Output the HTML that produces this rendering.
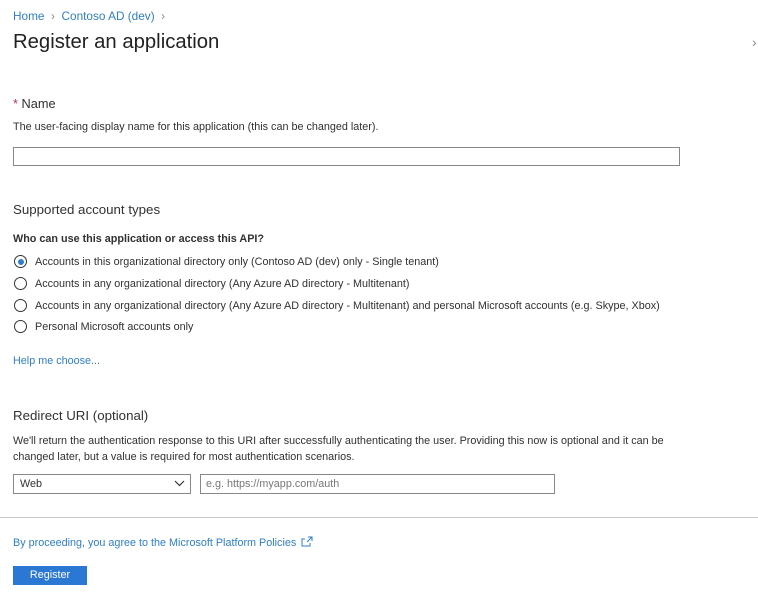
<!DOCTYPE html><html><head><style>
body{margin:0;width:758px;height:594px;background:#fff;font-family:"Liberation Sans",sans-serif;color:#323130;position:relative;overflow:hidden}
.a{position:absolute;white-space:nowrap}
.l{color:#2f7fc8}
.r{position:absolute;left:14px;width:11px;height:11px;border:1.3px solid #333;border-radius:50%}
.s{font-size:10.8px}
</style></head><body>
<div class="a l" style="left:13px;top:9px;font-size:11.8px">Home <span style="color:#888">&nbsp;›&nbsp;</span> Contoso AD (dev) <span style="color:#888">&nbsp;›</span></div>
<div class="a" style="left:13px;top:31px;font-size:20.3px;color:#222">Register an application</div>
<div class="a" style="left:752px;top:34px;font-size:14px;color:#888">›</div>
<div class="a" style="left:13px;top:96px;font-size:12.8px"><span style="color:#c4314b">*</span> Name</div>
<div class="a s" style="left:13px;top:121px">The user-facing display name for this application (this can be changed later).</div>
<div class="a" style="left:13px;top:147px;width:665px;height:17px;border:1px solid #8a8886"></div>
<div class="a" style="left:13px;top:202px;font-size:13.3px">Supported account types</div>
<div class="a s" style="left:13px;top:233px;font-weight:bold">Who can use this application or access this API?</div>
<div class="r" style="top:255px"><div style="position:absolute;left:2.5px;top:2.5px;width:6px;height:6px;border-radius:50%;background:#2f7fc8"></div></div>
<div class="r" style="top:277px"></div><div class="r" style="top:299px"></div><div class="r" style="top:320px"></div>
<div class="a s" style="left:35px;top:256px">Accounts in this organizational directory only (Contoso AD (dev) only - Single tenant)</div>
<div class="a s" style="left:35px;top:278px">Accounts in any organizational directory (Any Azure AD directory - Multitenant)</div>
<div class="a s" style="left:35px;top:300px">Accounts in any organizational directory (Any Azure AD directory - Multitenant) and personal Microsoft accounts (e.g. Skype, Xbox)</div>
<div class="a s" style="left:35px;top:321px">Personal Microsoft accounts only</div>
<div class="a l s" style="left:13px;top:355px">Help me choose...</div>
<div class="a" style="left:13px;top:408px;font-size:13.3px">Redirect URI (optional)</div>
<div class="a s" style="left:13px;top:433px;line-height:16px">We'll return the authentication response to this URI after successfully authenticating the user. Providing this now is optional and it can be<br>changed later, but a value is required for most authentication scenarios.</div>
<div class="a" style="left:13px;top:474px;width:176px;height:18px;border:1px solid #8a8886"><span class="s" style="position:absolute;left:6px;top:3px">Web</span>
<svg style="position:absolute;right:5px;top:5px" width="11" height="7"><path d="M1 1l4.5 4.5L10 1" fill="none" stroke="#333" stroke-width="1.2"/></svg></div>
<div class="a" style="left:200px;top:474px;width:353px;height:18px;border:1px solid #8a8886"><span class="s" style="position:absolute;left:5px;top:3px;color:#777">e.g. https://myapp.com/auth</span></div>
<div class="a" style="left:0;top:517px;width:758px;height:1px;background:#c8c6c4"></div>
<div class="a l s" style="left:13px;top:536px">By proceeding, you agree to the Microsoft Platform Policies
<svg width="12" height="11" style="vertical-align:-1px;margin-left:2px"><path d="M7 1h4v4M11 1L6 6M9 7v3H1V3h3" fill="none" stroke="#2f7fc8" stroke-width="1"/></svg></div>
<div class="a" style="left:13px;top:566px;width:74px;height:19px;background:#2b78d4;color:#fff;font-size:10.8px;text-align:center;line-height:19px">Register</div>
</body></html>
